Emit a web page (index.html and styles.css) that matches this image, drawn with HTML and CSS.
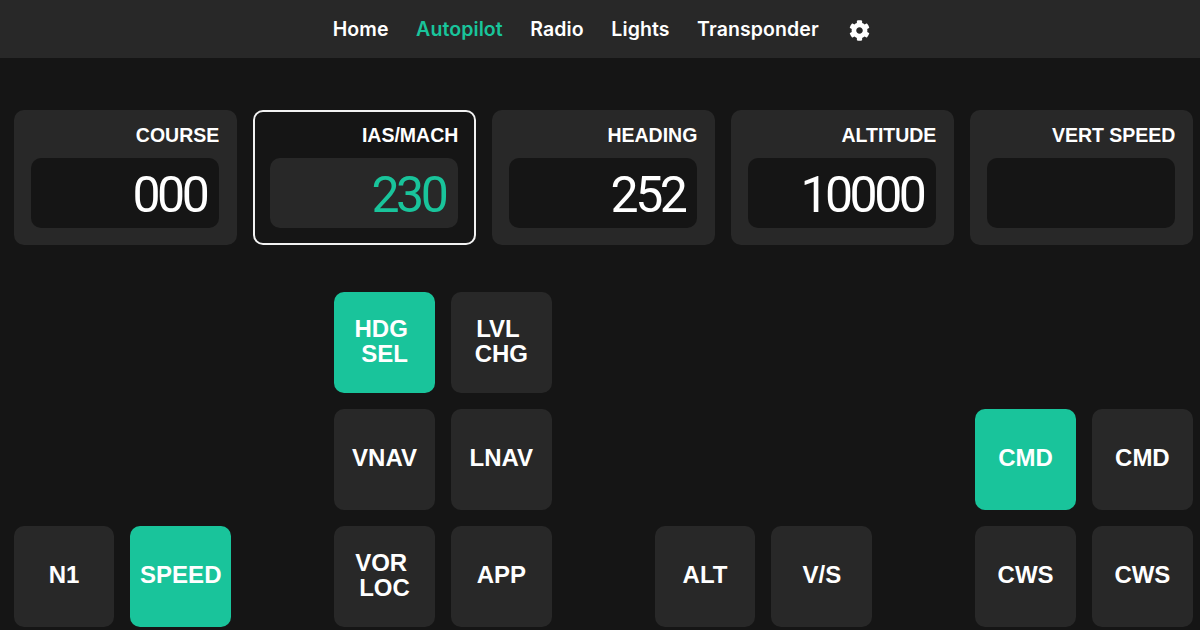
FILE: index.html
```html
<!DOCTYPE html>
<html lang="en">
<head>
    <meta charset="UTF-8">
    <title>Autopilot</title>
    <link rel="stylesheet" href="styles.css">
</head>
<body>
    <nav class="topbar">
        <a class="nav-link" href="#">Home</a>
        <a class="nav-link active" href="#">Autopilot</a>
        <a class="nav-link" href="#">Radio</a>
        <a class="nav-link" href="#">Lights</a>
        <a class="nav-link" href="#">Transponder</a>
        <a class="nav-icon" href="#">
            <svg viewBox="0 0 512 512" width="21" height="21"><path fill="currentColor" d="M487.4 315.7l-42.6-24.6c4.3-23.2 4.3-47 0-70.2l42.6-24.6c4.9-2.8 7.1-8.6 5.5-14-11.1-35.6-30-67.8-54.7-94.6-3.8-4.1-10-5.1-14.8-2.3L380.8 110c-17.9-15.4-38.5-27.3-60.8-35.1V25.8c0-5.6-3.9-10.5-9.4-11.7-36.7-8.2-74.3-7.8-109.2 0-5.5 1.2-9.4 6.1-9.4 11.7V75c-22.2 7.9-42.8 19.8-60.8 35.1L88.7 85.5c-4.9-2.8-11-1.9-14.8 2.3-24.7 26.7-43.6 58.9-54.7 94.6-1.7 5.4.6 11.2 5.5 14L67.3 221c-4.3 23.2-4.3 47 0 70.2l-42.6 24.6c-4.9 2.8-7.1 8.6-5.5 14 11.1 35.6 30 67.8 54.7 94.6 3.8 4.1 10 5.1 14.8 2.3l42.6-24.6c17.9 15.4 38.5 27.3 60.8 35.1v49.2c0 5.6 3.9 10.5 9.4 11.7 36.7 8.2 74.3 7.8 109.2 0 5.5-1.2 9.4-6.1 9.4-11.7v-49.2c22.2-7.9 42.8-19.8 60.8-35.1l42.6 24.6c4.9 2.8 11 1.9 14.8-2.3 24.7-26.7 43.6-58.9 54.7-94.6 1.5-5.5-.7-11.3-5.6-14.1zM256 336c-44.1 0-80-35.9-80-80s35.9-80 80-80 80 35.9 80 80-35.9 80-80 80z"/></svg>
        </a>
    </nav>

    <main class="panel">
        <section class="displays">
            <div class="display">
                <div class="display-label">COURSE</div>
                <div class="display-screen">000</div>
            </div>
            <div class="display selected">
                <div class="display-label">IAS/MACH</div>
                <div class="display-screen">230</div>
            </div>
            <div class="display">
                <div class="display-label">HEADING</div>
                <div class="display-screen">252</div>
            </div>
            <div class="display">
                <div class="display-label">ALTITUDE</div>
                <div class="display-screen">10000</div>
            </div>
            <div class="display">
                <div class="display-label">VERT SPEED</div>
                <div class="display-screen"></div>
            </div>
        </section>

        <section class="switches">
            <div class="switch-group">
                <button class="switch">N1</button>
                <button class="switch on">SPEED</button>
            </div>
            <div class="switch-group">
                <button class="switch on">HDG&nbsp;<br>SEL</button>
                <button class="switch">LVL&nbsp;<br>CHG</button>
                <button class="switch">VNAV</button>
                <button class="switch">LNAV</button>
                <button class="switch">VOR&nbsp;<br>LOC</button>
                <button class="switch">APP</button>
            </div>
            <div class="switch-group">
                <button class="switch">ALT</button>
                <button class="switch">V/S</button>
            </div>
            <div class="switch-group">
                <button class="switch on">CMD</button>
                <button class="switch">CMD</button>
                <button class="switch">CWS</button>
                <button class="switch">CWS</button>
            </div>
        </section>
    </main>
</body>
</html>
```

FILE: styles.css
```css
:root {
    --bg-color: #151515;
    --surface-color: #282828;
    --accent-color: #19c49b;
}
html, body {
    height: 630px;
    overflow: hidden;
}
body {
    margin: 0;
    background: var(--bg-color);
    color: #fff;
    font-family: 'Liberation Sans', sans-serif;
    font-weight: 700;
}
.topbar {
    height: 58px;
    background: var(--surface-color);
    display: flex;
    justify-content: center;
    align-items: center;
    gap: 27.5px;
    padding-left: 3px;
}
.nav-link {
    color: #fff;
    font-family: 'Inter', sans-serif;
    font-weight: 600;
    font-size: 19.5px;
    letter-spacing: 0.1px;
    text-decoration: none;
}
.nav-link.active {
    color: var(--accent-color);
}
.nav-icon {
    color: #fff;
    display: flex;
    margin-left: 3px;
    margin-top: 2px;
}
.panel {
    padding: 52px 7.2px 0 13.6px;
}
.displays {
    display: flex;
    gap: 16px;
}
.display {
    box-sizing: border-box;
    width: 223.2px;
    height: 135px;
    padding: 14px 17.4px 17px;
    background: var(--surface-color);
    border-radius: 10px;
}
.display-label {
    height: 34px;
    font-size: 19.5px;
    line-height: 22px;
    text-align: right;
}
.display-screen {
    height: 70px;
    padding-right: 13px;
    background: var(--bg-color);
    border-radius: 10px;
    font-family: 'Roboto', sans-serif;
    font-weight: 400;
    font-size: 50px;
    line-height: 75px;
    letter-spacing: -3.5px;
    text-align: right;
}
.display.selected {
    background: var(--bg-color);
    box-shadow: inset 0 0 0 2px #f2f2f2;
}
.display.selected .display-screen {
    background: var(--surface-color);
    color: var(--accent-color);
}
.switches {
    margin-top: 47px;
    display: flex;
    justify-content: space-between;
    align-items: flex-end;
}
.switch-group {
    display: grid;
    grid-template-columns: 100.8px 100.8px;
    gap: 16px;
}
.switch {
    height: 101px;
    padding: 0 0 4px;
    border: none;
    border-radius: 10px;
    background: var(--surface-color);
    color: #fff;
    font-family: inherit;
    font-weight: 700;
    font-size: 24px;
    line-height: 25px;
}
.switch.on {
    background: var(--accent-color);
}
```
